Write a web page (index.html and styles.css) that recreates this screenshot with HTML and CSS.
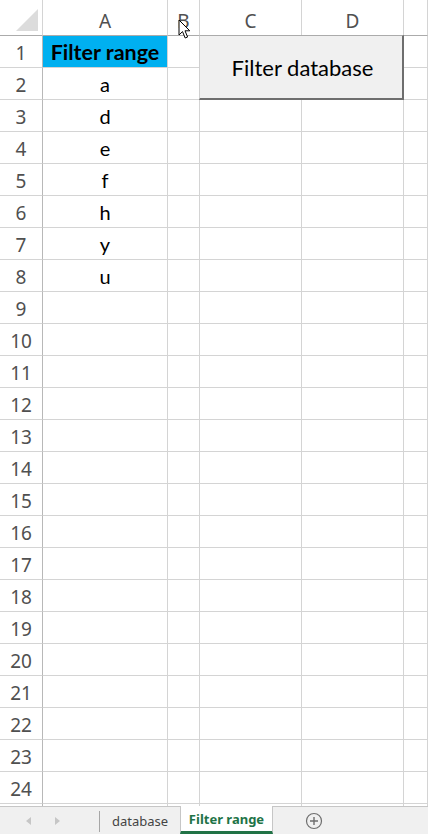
FILE: index.html
```html
<!DOCTYPE html>
<html>
<head>
<meta charset="utf-8">
<link rel="stylesheet" href="styles.css">
</head>
<body>
<div class="sheet">
  <div class="grid">
    <div class="corner"><svg width="24" height="24" viewBox="0 0 24 24"><polygon points="1,23 23,23 23,1" fill="#dcdcdc"/></svg></div>
    <div class="ch">A</div><div class="ch">B</div><div class="ch">C</div><div class="ch">D</div><div class="ch"></div>

    <div class="rh">1</div><div class="c title">Filter range</div><div class="c"></div><div class="c"></div><div class="c"></div><div class="c"></div>
    <div class="rh">2</div><div class="c">a</div><div class="c"></div><div class="c"></div><div class="c"></div><div class="c"></div>
    <div class="rh">3</div><div class="c">d</div><div class="c"></div><div class="c"></div><div class="c"></div><div class="c"></div>
    <div class="rh">4</div><div class="c">e</div><div class="c"></div><div class="c"></div><div class="c"></div><div class="c"></div>
    <div class="rh">5</div><div class="c">f</div><div class="c"></div><div class="c"></div><div class="c"></div><div class="c"></div>
    <div class="rh">6</div><div class="c">h</div><div class="c"></div><div class="c"></div><div class="c"></div><div class="c"></div>
    <div class="rh">7</div><div class="c">y</div><div class="c"></div><div class="c"></div><div class="c"></div><div class="c"></div>
    <div class="rh">8</div><div class="c">u</div><div class="c"></div><div class="c"></div><div class="c"></div><div class="c"></div>
    <div class="rh">9</div><div class="c"></div><div class="c"></div><div class="c"></div><div class="c"></div><div class="c"></div>
    <div class="rh">10</div><div class="c"></div><div class="c"></div><div class="c"></div><div class="c"></div><div class="c"></div>
    <div class="rh">11</div><div class="c"></div><div class="c"></div><div class="c"></div><div class="c"></div><div class="c"></div>
    <div class="rh">12</div><div class="c"></div><div class="c"></div><div class="c"></div><div class="c"></div><div class="c"></div>
    <div class="rh">13</div><div class="c"></div><div class="c"></div><div class="c"></div><div class="c"></div><div class="c"></div>
    <div class="rh">14</div><div class="c"></div><div class="c"></div><div class="c"></div><div class="c"></div><div class="c"></div>
    <div class="rh">15</div><div class="c"></div><div class="c"></div><div class="c"></div><div class="c"></div><div class="c"></div>
    <div class="rh">16</div><div class="c"></div><div class="c"></div><div class="c"></div><div class="c"></div><div class="c"></div>
    <div class="rh">17</div><div class="c"></div><div class="c"></div><div class="c"></div><div class="c"></div><div class="c"></div>
    <div class="rh">18</div><div class="c"></div><div class="c"></div><div class="c"></div><div class="c"></div><div class="c"></div>
    <div class="rh">19</div><div class="c"></div><div class="c"></div><div class="c"></div><div class="c"></div><div class="c"></div>
    <div class="rh">20</div><div class="c"></div><div class="c"></div><div class="c"></div><div class="c"></div><div class="c"></div>
    <div class="rh">21</div><div class="c"></div><div class="c"></div><div class="c"></div><div class="c"></div><div class="c"></div>
    <div class="rh">22</div><div class="c"></div><div class="c"></div><div class="c"></div><div class="c"></div><div class="c"></div>
    <div class="rh">23</div><div class="c"></div><div class="c"></div><div class="c"></div><div class="c"></div><div class="c"></div>
    <div class="rh">24</div><div class="c"></div><div class="c"></div><div class="c"></div><div class="c"></div><div class="c"></div>

    <div class="rh tail"></div><div class="c tail"></div><div class="c tail"></div><div class="c tail"></div><div class="c tail"></div><div class="c tail"></div>
  </div>

  <button class="macro-btn">Filter database</button>

  <svg class="cursor" width="14" height="21" viewBox="0 0 14 21">
    <path d="M1 1 L1 16 L4.5 12.6 L7.2 19 L9.6 18 L7 11.8 L11.8 11.8 Z" fill="#fff" stroke="#000" stroke-width="1" stroke-linejoin="miter"/>
  </svg>

  <div class="tabbar">
    <div class="nav">
      <svg width="6" height="8" viewBox="0 0 6 8"><polygon points="5,0 5,8 0,4" fill="#c6c6c6"/></svg>
      <svg width="6" height="8" viewBox="0 0 6 8"><polygon points="1,0 1,8 6,4" fill="#c6c6c6"/></svg>
    </div>
    <div class="sep"></div>
    <div class="tab">database</div>
    <div class="tab active">Filter range</div>
    <div class="add">
      <svg width="18" height="18" viewBox="0 0 18 18"><circle cx="9" cy="9" r="7.5" fill="none" stroke="#6e6e6e" stroke-width="1.2"/><path d="M9 5 V13 M5 9 H13" stroke="#6e6e6e" stroke-width="1.4"/></svg>
    </div>
  </div>
</div>
</body>
</html>
```

FILE: styles.css
```css
* { box-sizing: border-box; }
html, body { margin: 0; padding: 0; background: #fff; }
body { width: 428px; height: 834px; overflow: hidden; }

.sheet { position: relative; width: 428px; height: 834px; display: flex; flex-direction: column; }

.grid {
  display: grid;
  grid-template-columns: 43px 125px 32px 102px 102px 1fr;
  grid-template-rows: 36px repeat(24, 32px) 2px;
}

.corner {
  border-right: 1px solid #d4d4d4;
  border-bottom: 1px solid #ababab;
  display: flex;
  align-items: flex-end;
  justify-content: flex-end;
  padding: 0 3px 3px 0;
}

.ch {
  border-right: 1px solid #d4d4d4;
  border-bottom: 1px solid #ababab;
  font-family: "Noto Sans", "Open Sans", sans-serif;
  font-size: 19px;
  color: #505050;
  display: flex;
  align-items: center;
  justify-content: center;
  padding-top: 7px;
}

.rh {
  border-right: 1px solid #b8b8b8;
  border-bottom: 1px solid #d4d4d4;
  font-family: "Noto Sans", "Open Sans", sans-serif;
  font-size: 19px;
  color: #505050;
  display: flex;
  align-items: center;
  justify-content: center;
  padding-top: 2px;
}

.c {
  border-right: 1px solid #d4d4d4;
  border-bottom: 1px solid #d4d4d4;
  font-family: Lato, "Liberation Sans", sans-serif;
  font-size: 20px;
  color: #000;
  display: flex;
  align-items: center;
  justify-content: center;
  padding-top: 1px;
}

.title {
  background: #00b0f0;
  font-weight: bold;
  font-size: 21.5px;
  border-color: #00b0f0 #d4d4d4 #d4d4d4 #00b0f0;
}

.tail { border-bottom: none; }

.macro-btn {
  position: absolute;
  left: 199px;
  top: 35px;
  width: 205px;
  height: 65px;
  margin: 0;
  background: #f0f0f0;
  border: none;
  border-left: 1px solid #d0d0d0;
  border-top: 1px solid #ababab;
  border-right: 2px solid #6e6e6e;
  border-bottom: 2px solid #6e6e6e;
  font-family: Lato, "Liberation Sans", sans-serif;
  font-size: 22px;
  color: #000;
  padding: 0 0 0 3px;
}

.cursor { position: absolute; left: 178px; top: 19px; }

.tabbar {
  flex: 1;
  display: flex;
  align-items: stretch;
  background: #f0f0f0;
  border-top: 1px solid #c6c6c6;
  font-family: "Noto Sans", "Open Sans", sans-serif;
  font-size: 13px;
}

.nav {
  width: 99px;
  display: flex;
  align-items: center;
  gap: 22px;
  padding-left: 26px;
}

.sep { width: 1px; background: #a6a6a6; margin: 4px 0 2px; }

.tab {
  display: flex;
  align-items: center;
  padding: 0 12px 0 12px;
  color: #444;
  width: 80px;
}

.active {
  width: 93px;
  justify-content: center;
  background: #fff;
  color: #217346;
  font-weight: bold;
  border-left: 1px solid #c6c6c6;
  border-right: 1px solid #c6c6c6;
  border-bottom: 3px solid #217346;
  margin-top: -1px;
  padding: 1px 0 0;
}

.add {
  display: flex;
  align-items: center;
  padding-left: 32px;
}
```
